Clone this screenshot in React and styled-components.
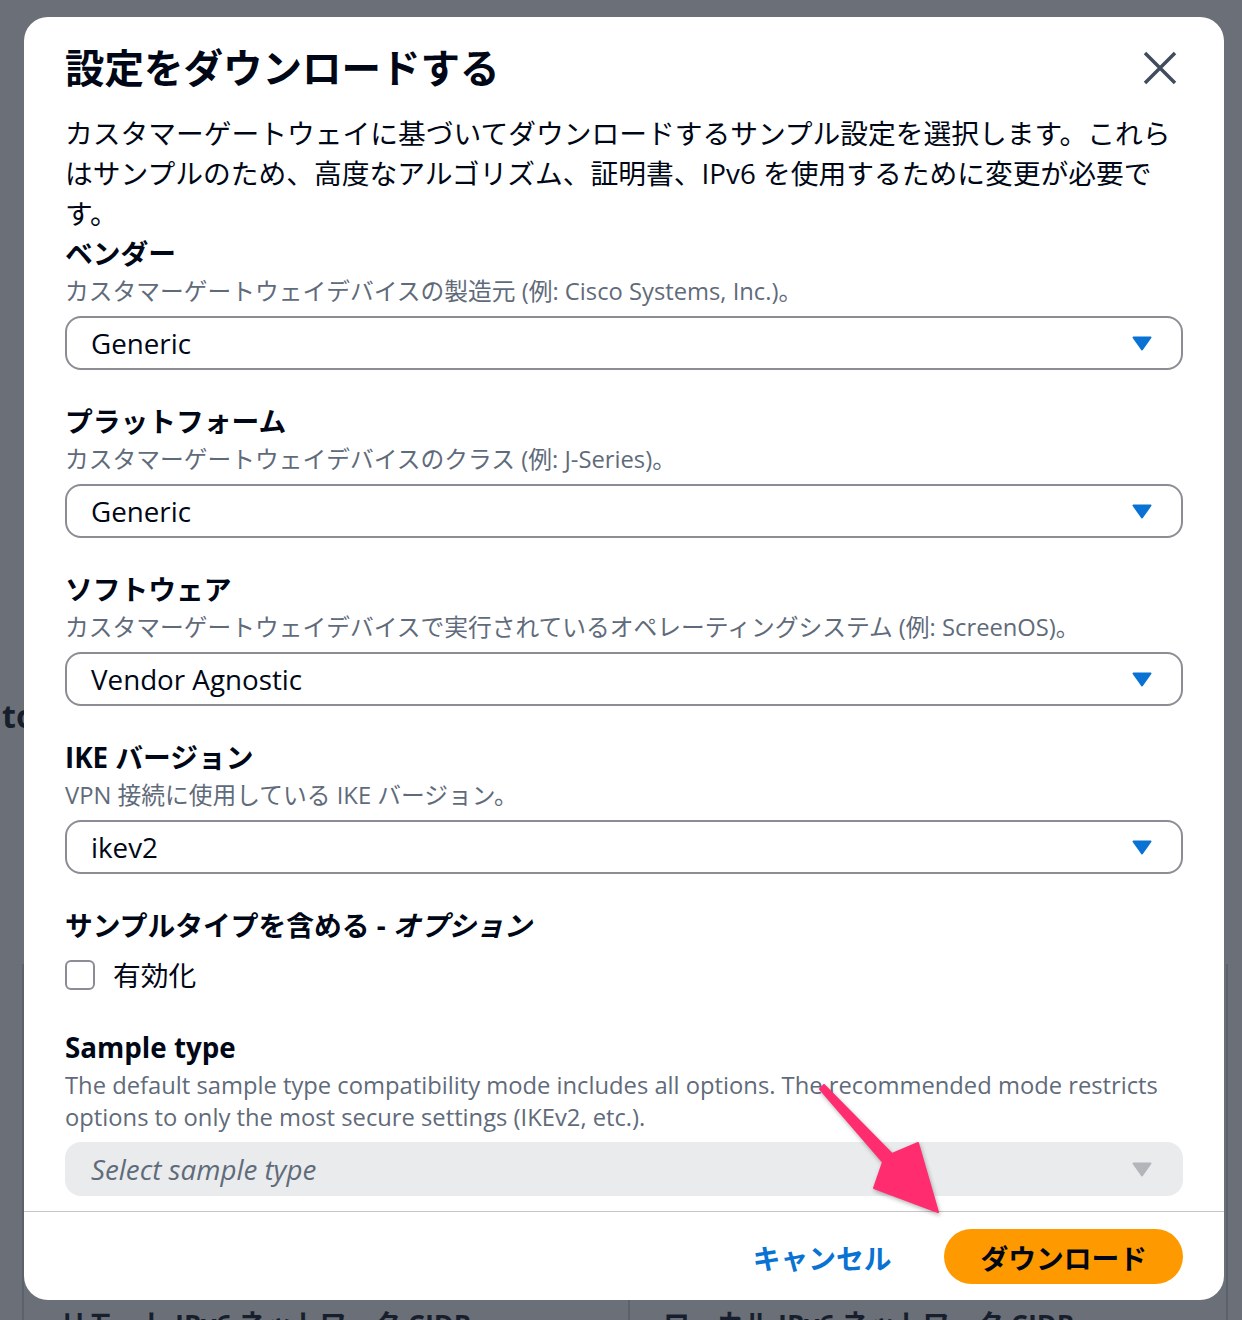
import styled, { createGlobalStyle } from "styled-components";

const GlobalStyle = createGlobalStyle`
  body {
    margin: 0;
    font-family: "Open Sans", "Noto Sans CJK JP", sans-serif;
    color: #000716;
  }
`;

const fields = [
  {
    label: "ベンダー",
    hint: "カスタマーゲートウェイデバイスの製造元 (例: Cisco Systems, Inc.)。",
    value: "Generic",
  },
  {
    label: "プラットフォーム",
    hint: "カスタマーゲートウェイデバイスのクラス (例: J-Series)。",
    value: "Generic",
  },
  {
    label: "ソフトウェア",
    hint: "カスタマーゲートウェイデバイスで実行されているオペレーティングシステム (例: ScreenOS)。",
    value: "Vendor Agnostic",
  },
  {
    label: "IKE バージョン",
    hint: "VPN 接続に使用している IKE バージョン。",
    value: "ikev2",
  },
];

function Caret({ disabled }) {
  return (
    <svg width="20" height="15" viewBox="0 0 20 15">
      <path
        d="M1.5 1.5 H18.5 L10 13.5 Z"
        fill={disabled ? "#b4b4bb" : "#0972d3"}
        stroke={disabled ? "#b4b4bb" : "#0972d3"}
        strokeWidth="2"
        strokeLinejoin="round"
      />
    </svg>
  );
}

function Dropdown({ value, placeholder, disabled }) {
  return (
    <Select $disabled={disabled}>
      {disabled ? <Placeholder>{placeholder}</Placeholder> : <span>{value}</span>}
      <Caret disabled={disabled} />
    </Select>
  );
}

export default function App() {
  return (
    <Page>
      <GlobalStyle />
      <BgPage>
        <BgRule />
        <BgHeading>to</BgHeading>
        <BgRule $top={112} />
        <BgTabRule />
        <BgCard>
          <BgColumn>リモート IPv6 ネットワーク CIDR</BgColumn>
          <BgColumn $divided>ローカル IPv6 ネットワーク CIDR</BgColumn>
        </BgCard>
      </BgPage>

      <Overlay>
        <Modal>
          <Header>
            <Title>設定をダウンロードする</Title>
            <CloseButton aria-label="閉じる">
              <svg width="34" height="34" viewBox="0 0 34 34">
                <path
                  d="M2 2 L32 32 M32 2 L2 32"
                  stroke="#414d5c"
                  strokeWidth="3.5"
                />
              </svg>
            </CloseButton>
          </Header>

          <Body>
            <Intro>
              カスタマーゲートウェイに基づいてダウンロードするサンプル設定を選択します。これらはサンプルのため、高度なアルゴリズム、証明書、IPv6
              を使用するために変更が必要です。
            </Intro>

            {fields.map((f) => (
              <Field key={f.label}>
                <Label>{f.label}</Label>
                <Hint>{f.hint}</Hint>
                <Dropdown value={f.value} />
              </Field>
            ))}

            <Field $gap={32}>
              <Label>
                サンプルタイプを含める - <i>オプション</i>
              </Label>
              <CheckRow>
                <CheckBox />
                <span>有効化</span>
              </CheckRow>
            </Field>

            <Field>
              <Label>Sample type</Label>
              <Hint>
                The default sample type compatibility mode includes all options.
                The recommended mode restricts options to only the most secure
                settings (IKEv2, etc.).
              </Hint>
              <Dropdown disabled placeholder="Select sample type" />
            </Field>
          </Body>

          <Footer>
            <LinkButton>キャンセル</LinkButton>
            <PrimaryButton>ダウンロード</PrimaryButton>
          </Footer>
        </Modal>
      </Overlay>

      <Annotation viewBox="0 0 1242 1320">
        <polygon
          points="820,1089 824,1085 892,1154 918,1143 938,1212 874,1188 883,1162"
          fill="#ff2d6f"
          stroke="#ff2d6f"
          strokeWidth="2"
          strokeLinejoin="round"
        />
      </Annotation>
    </Page>
  );
}

const Page = styled.div`
  position: relative;
  width: 1242px;
  height: 1320px;
  overflow: hidden;
  background: #fff;
`;

const BgPage = styled.div`
  display: flex;
  flex-direction: column;
  height: 100%;
  padding-top: 659px;
  box-sizing: border-box;
`;

const BgRule = styled.div`
  height: 2px;
  margin-top: ${(p) => p.$top || 0}px;
  background: #d1d5db;
`;

const BgTabRule = styled.div`
  align-self: flex-end;
  width: 40%;
  height: 2px;
  margin-top: 25px;
  background: #d1d5db;
`;

const BgHeading = styled.h2`
  margin: 37px 0 0 2px;
  font-size: 32px;
  line-height: 40px;
  font-weight: 700;
`;

const BgCard = styled.div`
  flex: 1;
  display: grid;
  grid-template-columns: 604px 1fr;
  margin: 91px 14px 0 22px;
  border-left: 2px solid #d1d5db;
  border-right: 2px solid #d1d5db;
`;

const BgColumn = styled.div`
  padding: 342px 0 0 ${(p) => (p.$divided ? 33 : 36)}px;
  border-left: ${(p) => (p.$divided ? "2px solid #d1d5db" : "none")};
  font-size: 27px;
  font-weight: 700;
  line-height: 36px;
  white-space: nowrap;
`;

const Overlay = styled.div`
  position: absolute;
  inset: 0;
  padding: 17px 18px 0 24px;
  background: rgba(35, 43, 55, 0.675);
`;

const Modal = styled.div`
  display: flex;
  flex-direction: column;
  width: 1200px;
  height: 1283px;
  background: #fff;
  border-radius: 24px;
  overflow: hidden;
`;

const Header = styled.div`
  display: flex;
  align-items: center;
  justify-content: space-between;
  padding: 26px 44px 0 41px;
`;

const Title = styled.h1`
  margin: 0;
  font-size: 39.5px;
  line-height: 50px;
  font-weight: 700;
`;

const CloseButton = styled.button`
  display: flex;
  align-items: center;
  justify-content: center;
  width: 40px;
  height: 40px;
  padding: 0;
  border: none;
  background: none;
`;

const Body = styled.div`
  flex: 1;
  overflow: hidden;
  padding: 20px 41px 0;
  font-size: 27.75px;
`;

const Intro = styled.p`
  margin: 0;
  line-height: 40px;
`;

const Field = styled.div`
  margin-bottom: ${(p) => (p.$gap ?? 31)}px;
`;

const Label = styled.div`
  font-size: 27.75px;
  font-weight: 700;
  line-height: 40px;
`;

const Hint = styled.p`
  margin: 0 0 9px;
  padding-top: 2px;
  font-size: 23.75px;
  line-height: 32px;
  color: #5f6b7a;
`;

const Select = styled.div`
  display: flex;
  align-items: center;
  justify-content: space-between;
  height: 54px;
  box-sizing: border-box;
  padding: 0 29px 0 24px;
  border: 2px solid ${(p) => (p.$disabled ? "#e9ebed" : "#8c8c94")};
  border-radius: 16px;
  background: ${(p) => (p.$disabled ? "#e9ebed" : "#fff")};
  font-size: 27.75px;
`;

const Placeholder = styled.span`
  font-style: italic;
  color: #5f6b7a;
`;

const CheckRow = styled.label`
  display: flex;
  align-items: center;
  gap: 18px;
  margin-top: 10px;
  line-height: 40px;
`;

const CheckBox = styled.span`
  width: 30px;
  height: 30px;
  box-sizing: border-box;
  border: 2px solid #8c8c94;
  border-radius: 6px;
`;

const Footer = styled.div`
  display: flex;
  align-items: center;
  justify-content: flex-end;
  gap: 53px;
  padding: 17px 41px 16px;
  border-top: 1px solid #c6c6cd;
`;

const LinkButton = styled.button`
  padding: 0;
  border: none;
  background: none;
  font-family: inherit;
  font-size: 27.75px;
  font-weight: 700;
  color: #0972d3;
`;

const PrimaryButton = styled.button`
  height: 55px;
  padding: 0 36px;
  border: none;
  border-radius: 28px;
  background: #ff9900;
  font-family: inherit;
  font-size: 27.75px;
  font-weight: 700;
  color: #000716;
`;

const Annotation = styled.svg`
  position: absolute;
  inset: 0;
  width: 1242px;
  height: 1320px;
  pointer-events: none;
  filter: drop-shadow(1px 2px 2px rgba(0, 0, 0, 0.3));
`;
